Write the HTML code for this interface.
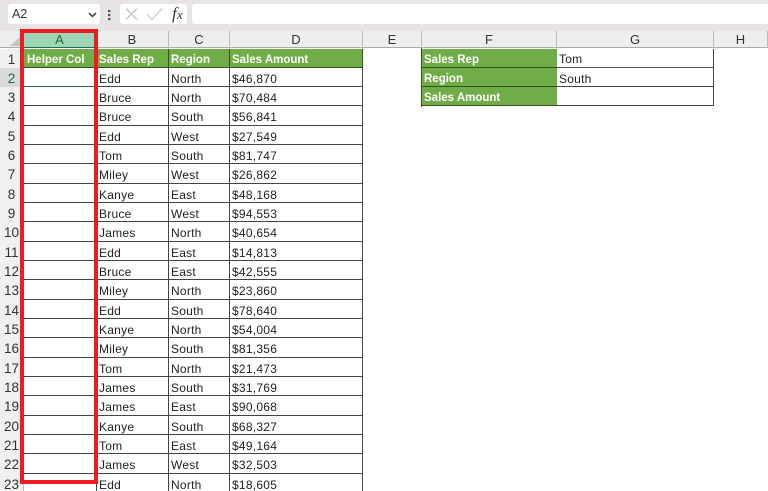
<!DOCTYPE html>
<html><head><meta charset="utf-8"><style>
html,body{margin:0;padding:0;width:768px;height:491px;overflow:hidden;background:#fff}
body{position:relative;font-family:"Liberation Sans",sans-serif;font-size:12px;color:#222}
.a{position:absolute;box-sizing:border-box}
.ch{position:absolute;top:31px;height:17px;background:#eeeeee;border-right:1px solid #bdbdbd;border-bottom:1px solid #aaa;box-sizing:border-box;text-align:center;font-size:13px;line-height:18px;color:#333}
.rows{position:absolute;left:0;top:48.5px;width:768px}
.r{position:relative;height:19.33px}
.r div{position:absolute;top:0;height:100%;box-sizing:border-box;line-height:22.5px;white-space:nowrap;overflow:hidden}
.r div.n{left:0;width:24px;background:#f0f0f0;border-right:1px solid #bbb;text-align:center;font-size:13.5px;color:#333}
.x{left:24px;width:72px;border-bottom:1px solid #444}
.b,.c,.d{border-bottom:1px solid #444;border-right:1px solid #444;padding-left:2px;letter-spacing:.25px}
.b{left:96px;width:73px;border-left:1px solid #444}
.c{left:169px;width:61px}
.d{left:230px;width:133px}
.g{background:#70ad47;color:#fff;font-weight:bold;font-size:11.5px;letter-spacing:0;border-color:#33521f!important}
.r div.g{line-height:23px}
.r div.t{line-height:21px}
</style></head><body>
<div class="a" style="left:0;top:0;width:768px;height:31px;background:#e9e4e4"></div>
<div class="a" style="left:8px;top:4px;width:92px;height:20px;background:#fff;border-radius:3px;font-size:12.5px;line-height:20px;padding-left:4px;color:#333">A2</div>
<svg class="a" style="left:88px;top:11px" width="10" height="8"><path d="M1 2 L4.5 5.5 L8 2" fill="none" stroke="#333" stroke-width="1.5"/></svg>
<svg class="a" style="left:107px;top:9px" width="6" height="12"><rect x="1" y="1" width="2.4" height="2.2" fill="#555"/><rect x="1" y="5" width="2.4" height="2.2" fill="#555"/><rect x="1" y="9" width="2.4" height="2.2" fill="#555"/></svg>
<div class="a" style="left:120px;top:4px;width:67px;height:20px;background:#fff;border-radius:3px"></div>
<svg class="a" style="left:120px;top:4px" width="67" height="20"><path d="M6 4.5 L17 15.5 M17 4.5 L6 15.5" stroke="#bdbdbd" stroke-width="1.2" fill="none"/><path d="M27 10.5 L32 15.5 L42 4.5" stroke="#c6c6c6" stroke-width="1.2" fill="none"/><text x="52" y="15" font-family="Liberation Serif,serif" font-style="italic" font-size="17" fill="#333">f</text><text x="57" y="15" font-family="Liberation Serif,serif" font-style="italic" font-size="13" fill="#333">x</text></svg>
<div class="a" style="left:192px;top:4px;width:576px;height:20px;background:#fff;border-radius:3px 0 0 3px"></div>

<div class="a" style="left:0;top:31px;width:24px;height:17px;background:#eeeeee;border-right:1px solid #bbb;border-bottom:1px solid #aaa"></div>
<svg class="a" style="left:8px;top:34px" width="15" height="13"><path d="M14 1 V12 H2 Z" fill="#c4c4c4"/></svg>
<div class="ch" style="left:24px;width:72px;background:#9fd5b7;color:#1f6b43;border-bottom:1px solid #1f7246">A</div>
<div class="ch" style="left:96px;width:73px">B</div>
<div class="ch" style="left:169px;width:61px">C</div>
<div class="ch" style="left:230px;width:133px">D</div>
<div class="ch" style="left:363px;width:59px">E</div>
<div class="ch" style="left:422px;width:135px">F</div>
<div class="ch" style="left:557px;width:157px">G</div>
<div class="ch" style="left:714px;width:54px">H</div>

<div class="rows">
<div class="r"><div class="n">1</div><div class="x g" style="padding-left:3px">Helper Col</div><div class="b g">Sales Rep</div><div class="c g">Region</div><div class="d g">Sales Amount</div>
<div class="g" style="left:422px;width:135px;border-bottom:1px solid;padding-left:2px">Sales Rep</div><div class="t" style="left:557px;width:157px;border-bottom:1px solid #555;border-right:1px solid #444;padding-left:2px;letter-spacing:.25px">Tom</div></div>
<div class="r"><div class="n" style="background:#d9d9d9;color:#1f6b43">2</div><div class="x" style="border-bottom:1px solid #1f7246"></div><div class="b">Edd</div><div class="c">North</div><div class="d">$46,870</div>
<div class="g" style="left:422px;width:135px;border-bottom:1px solid;padding-left:2px">Region</div><div style="left:557px;width:157px;border-bottom:1px solid #444;border-right:1px solid #444;padding-left:2px;letter-spacing:.25px">South</div></div>
<div class="r"><div class="n">3</div><div class="x"></div><div class="b">Bruce</div><div class="c">North</div><div class="d">$70,484</div>
<div class="g" style="left:422px;width:135px;border-bottom:1px solid;padding-left:2px">Sales Amount</div><div style="left:557px;width:157px;border-bottom:1px solid #444;border-right:1px solid #444"></div></div>
<div class="r"><div class="n">4</div><div class="x"></div><div class="b">Bruce</div><div class="c">South</div><div class="d">$56,841</div></div>
<div class="r"><div class="n">5</div><div class="x"></div><div class="b">Edd</div><div class="c">West</div><div class="d">$27,549</div></div>
<div class="r"><div class="n">6</div><div class="x"></div><div class="b">Tom</div><div class="c">South</div><div class="d">$81,747</div></div>
<div class="r"><div class="n">7</div><div class="x"></div><div class="b">Miley</div><div class="c">West</div><div class="d">$26,862</div></div>
<div class="r"><div class="n">8</div><div class="x"></div><div class="b">Kanye</div><div class="c">East</div><div class="d">$48,168</div></div>
<div class="r"><div class="n">9</div><div class="x"></div><div class="b">Bruce</div><div class="c">West</div><div class="d">$94,553</div></div>
<div class="r"><div class="n">10</div><div class="x"></div><div class="b">James</div><div class="c">North</div><div class="d">$40,654</div></div>
<div class="r"><div class="n">11</div><div class="x"></div><div class="b">Edd</div><div class="c">East</div><div class="d">$14,813</div></div>
<div class="r"><div class="n">12</div><div class="x"></div><div class="b">Bruce</div><div class="c">East</div><div class="d">$42,555</div></div>
<div class="r"><div class="n">13</div><div class="x"></div><div class="b">Miley</div><div class="c">North</div><div class="d">$23,860</div></div>
<div class="r"><div class="n">14</div><div class="x"></div><div class="b">Edd</div><div class="c">South</div><div class="d">$78,640</div></div>
<div class="r"><div class="n">15</div><div class="x"></div><div class="b">Kanye</div><div class="c">North</div><div class="d">$54,004</div></div>
<div class="r"><div class="n">16</div><div class="x"></div><div class="b">Miley</div><div class="c">South</div><div class="d">$81,356</div></div>
<div class="r"><div class="n">17</div><div class="x"></div><div class="b">Tom</div><div class="c">North</div><div class="d">$21,473</div></div>
<div class="r"><div class="n">18</div><div class="x"></div><div class="b">James</div><div class="c">South</div><div class="d">$31,769</div></div>
<div class="r"><div class="n">19</div><div class="x"></div><div class="b">James</div><div class="c">East</div><div class="d">$90,068</div></div>
<div class="r"><div class="n">20</div><div class="x"></div><div class="b">Kanye</div><div class="c">South</div><div class="d">$68,327</div></div>
<div class="r"><div class="n">21</div><div class="x"></div><div class="b">Tom</div><div class="c">East</div><div class="d">$49,164</div></div>
<div class="r"><div class="n">22</div><div class="x"></div><div class="b">James</div><div class="c">West</div><div class="d">$32,503</div></div>
<div class="r"><div class="n">23</div><div class="x"></div><div class="b">Edd</div><div class="c">North</div><div class="d">$18,605</div></div>
</div>
<div class="a" style="left:421px;top:48px;width:1px;height:59px;background:#33521f"></div>
<div class="a" style="left:20px;top:29px;width:78px;height:455px;border:4px solid #ed1c24"></div>
</body></html>
